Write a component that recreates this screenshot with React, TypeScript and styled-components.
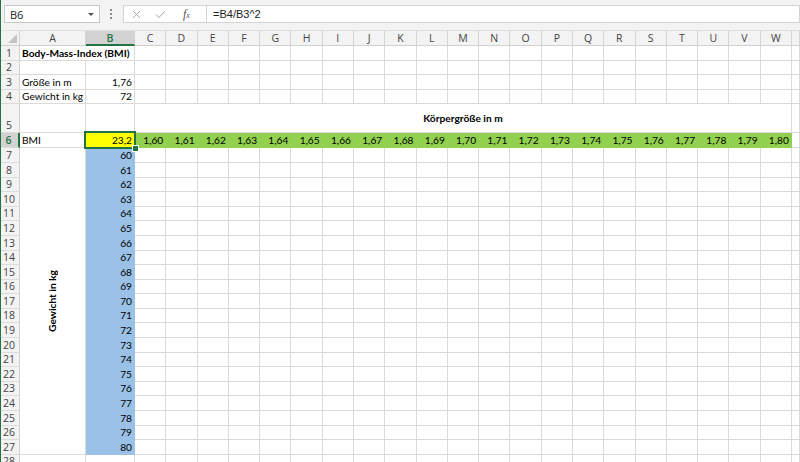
import React from "react";
import styled, { createGlobalStyle } from "styled-components";

const GlobalStyle = createGlobalStyle`
  html, body {
    margin: 0;
    padding: 0;
    background: #ffffff;
    overflow: hidden;
  }
`;

const CELL_FONT = `"Lato", "Liberation Sans", sans-serif`;
const UI_FONT = `"Open Sans", "Liberation Sans", sans-serif`;
const GREEN = "#217346";
const GRID = "#dadada";

const COLS = "ABCDEFGHIJKLMNOPQRSTUVWX".split("");
const HEIGHTS = Array.from({ length: 21 }, (_, i) => (1.6 + i / 100).toFixed(2).replace(".", ","));
const WEIGHTS = Array.from({ length: 21 }, (_, i) => String(60 + i));

const Window = styled.div`
  width: 800px;
  height: 462px;
  border-left: 1px solid ${GREEN};
  box-sizing: border-box;
  background: #f3f3f3;
  display: flex;
  flex-direction: column;
  overflow: hidden;
`;

const FormulaBar = styled.div`
  height: 30px;
  flex: none;
  display: flex;
  align-items: flex-start;
  padding: 5px 0 0 3px;
  box-sizing: border-box;
`;

const NameBox = styled.div`
  width: 96px;
  height: 18px;
  box-sizing: border-box;
  background: #fff;
  border: 1px solid #c8c8c8;
  display: flex;
  align-items: center;
  justify-content: space-between;
  padding: 0 5px 0 5px;
  font: 11px ${UI_FONT};
  color: #222;
`;

const DropArrow = styled.span`
  width: 0;
  height: 0;
  border-left: 3px solid transparent;
  border-right: 3px solid transparent;
  border-top: 3px solid #555;
`;

const Dots = styled.div`
  width: 22px;
  height: 18px;
  display: flex;
  flex-direction: column;
  align-items: center;
  justify-content: center;
  gap: 2px;

  span {
    width: 2px;
    height: 2px;
    background: #8a8a8a;
  }
`;

const IconBox = styled.div`
  height: 18px;
  width: 83px;
  margin-left: 1px;
  box-sizing: border-box;
  background: #fff;
  border: 1px solid #d4d4d4;
  border-right: none;
  display: flex;
  align-items: center;
  padding-left: 8px;
  gap: 14px;
`;

const Fx = styled.span`
  font: italic 12px "Liberation Serif", serif;
  color: #555;
  margin-left: 3px;
  sub {
    font-size: 8px;
    vertical-align: 0;
  }
`;

const FormulaInput = styled.div`
  flex: 1;
  height: 18px;
  box-sizing: border-box;
  background: #fff;
  border: 1px solid #d4d4d4;
  display: flex;
  align-items: center;
  padding-left: 6px;
  font: 11px "Liberation Sans", sans-serif;
  color: #222;
`;

const Sheet = styled.div`
  flex: 1;
  display: grid;
  grid-template-columns: 19px 66px 49px repeat(21, 31.29px) 1fr;
  grid-template-rows: 16px repeat(4, 14.6px) 28.6px 15.4px repeat(21, 14.6px) 14.6px;
  background: #fff;
  align-content: start;
`;

const Corner = styled.div`
  background: #f3f3f3;
  border-right: 1px solid #d0d0d0;
  border-bottom: 1px solid #d0d0d0;
  border-top: 1px solid #e0e0e0;
  position: relative;

  &::after {
    content: "";
    position: absolute;
    right: 2px;
    bottom: 2px;
    border-left: 9px solid transparent;
    border-bottom: 9px solid #c4c4c4;
  }
`;

const ColHeader = styled.div<{ $active?: boolean }>`
  background: ${(p) => (p.$active ? "#d2d2d2" : "#f3f3f3")};
  color: ${(p) => (p.$active ? GREEN : "#444")};
  border-top: 1px solid #e0e0e0;
  border-right: 1px solid #d4d4d4;
  border-bottom: ${(p) => (p.$active ? `2px solid ${GREEN}` : "1px solid #d0d0d0")};
  display: flex;
  align-items: center;
  justify-content: center;
  font: ${(p) => (p.$active ? 600 : 400)} 10.5px ${UI_FONT};
  box-sizing: border-box;
`;

const RowHeader = styled.div<{ $active?: boolean }>`
  background: ${(p) => (p.$active ? "#d2d2d2" : "#f3f3f3")};
  color: ${(p) => (p.$active ? GREEN : "#444")};
  border-right: ${(p) => (p.$active ? `2px solid ${GREEN}` : "1px solid #d0d0d0")};
  border-bottom: 1px solid #dcdcdc;
  display: flex;
  align-items: flex-end;
  justify-content: center;
  padding-right: 2px;
  font: ${(p) => (p.$active ? 600 : 400)} 10.5px/13px ${UI_FONT};
  box-sizing: border-box;
  overflow: hidden;
`;

const Cell = styled.div<{
  $fill?: string;
  $align?: "flex-start" | "flex-end" | "center";
  $valign?: "flex-end" | "center";
  $bold?: boolean;
  $span?: number;
  $rows?: number;
}>`
  background: ${(p) => p.$fill ?? "#fff"};
  border-right: 1px solid ${(p) => p.$fill ?? GRID};
  border-bottom: 1px solid ${(p) => p.$fill ?? GRID};
  grid-column: ${(p) => (p.$span ? `span ${p.$span}` : "auto")};
  grid-row: ${(p) => (p.$rows ? `span ${p.$rows}` : "auto")};
  display: flex;
  justify-content: ${(p) => p.$align ?? "flex-start"};
  align-items: ${(p) => p.$valign ?? "flex-end"};
  padding: 0 2px 0 2px;
  box-sizing: border-box;
  font: ${(p) => (p.$bold ? 700 : 400)} 10.2px/13px ${CELL_FONT};
  color: #000;
  white-space: nowrap;
  overflow: hidden;
  min-width: 0;
`;

const SelectedCell = styled(Cell)`
  position: relative;
  overflow: visible;

  &::before {
    content: "";
    position: absolute;
    left: -2px;
    top: -2px;
    right: -2px;
    bottom: -2px;
    border: 2px solid ${GREEN};
    pointer-events: none;
  }

  &::after {
    content: "";
    position: absolute;
    right: -5px;
    bottom: -5px;
    width: 5px;
    height: 5px;
    background: ${GREEN};
    border: 1px solid #fff;
    z-index: 2;
  }
`;

const VerticalText = styled.span`
  writing-mode: vertical-rl;
  transform: rotate(180deg);
  font-weight: 700;
`;

function Toolbar() {
  return (
    <FormulaBar>
      <NameBox>
        B6
        <DropArrow />
      </NameBox>
      <Dots>
        <span />
        <span />
        <span />
      </Dots>
      <IconBox>
        <svg width="9" height="9" viewBox="0 0 9 9">
          <path d="M1 1 L8 8 M8 1 L1 8" stroke="#a8a8a8" strokeWidth="1" fill="none" />
        </svg>
        <svg width="11" height="9" viewBox="0 0 11 9">
          <path d="M1 4.5 L4 7.5 L10 1" stroke="#a8a8a8" strokeWidth="1" fill="none" />
        </svg>
        <Fx>
          f<sub>x</sub>
        </Fx>
      </IconBox>
      <FormulaInput>=B4/B3^2</FormulaInput>
    </FormulaBar>
  );
}

function renderRow(r: number) {
  const cells: React.ReactNode[] = [
    <RowHeader key={`h${r}`} $active={r === 6}>
      {r}
    </RowHeader>,
  ];
  const empty = (c: string) => <Cell key={`${c}${r}`} />;

  if (r === 1) {
    cells.push(
      <Cell key="A1" $span={2} $bold>
        Body-Mass-Index (BMI)
      </Cell>
    );
    COLS.slice(2).forEach((c) => cells.push(empty(c)));
  } else if (r === 3 || r === 4) {
    cells.push(<Cell key={`A${r}`}>{r === 3 ? "Größe in m" : "Gewicht in kg"}</Cell>);
    cells.push(
      <Cell key={`B${r}`} $align="flex-end">
        {r === 3 ? "1,76" : "72"}
      </Cell>
    );
    COLS.slice(2).forEach((c) => cells.push(empty(c)));
  } else if (r === 5) {
    cells.push(empty("A"), empty("B"));
    cells.push(
      <Cell key="C5" $span={21} $bold $align="center" $valign="center">
        Körpergröße in m
      </Cell>
    );
    cells.push(empty("X"));
  } else if (r === 6) {
    cells.push(<Cell key="A6">BMI</Cell>);
    cells.push(
      <SelectedCell key="B6" $fill="#ffff00" $align="flex-end">
        23,2
      </SelectedCell>
    );
    HEIGHTS.forEach((h, i) =>
      cells.push(
        <Cell key={`h6-${i}`} $fill="#92d050" $align="flex-end">
          {h}
        </Cell>
      )
    );
    cells.push(empty("X"));
  } else if (r >= 7 && r <= 27) {
    if (r === 7) {
      cells.push(
        <Cell key="A7" $rows={21} $align="center" $valign="center">
          <VerticalText>Gewicht in kg</VerticalText>
        </Cell>
      );
    }
    cells.push(
      <Cell key={`B${r}`} $fill="#9bc2e6" $align="flex-end">
        {WEIGHTS[r - 7]}
      </Cell>
    );
    COLS.slice(2).forEach((c) => cells.push(empty(c)));
  } else {
    COLS.forEach((c) => cells.push(empty(c)));
  }
  return cells;
}

export default function App() {
  return (
    <>
      <GlobalStyle />
      <Window>
        <Toolbar />
        <Sheet>
          <Corner />
          {COLS.map((c) => (
            <ColHeader key={c} $active={c === "B"}>
              {c === "X" ? "" : c}
            </ColHeader>
          ))}
          {Array.from({ length: 28 }, (_, i) => renderRow(i + 1))}
        </Sheet>
      </Window>
    </>
  );
}
